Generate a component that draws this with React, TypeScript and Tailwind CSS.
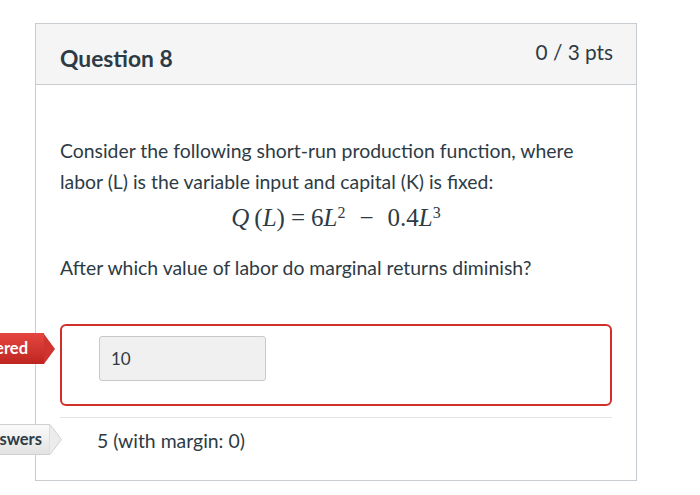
export default function App() {
  return (
    <div className="relative w-[700px] h-[495px] bg-white overflow-hidden" style={{ fontFamily: 'Lato, "Noto Sans", sans-serif' }}>
      <div className="absolute left-[35px] top-[23px] w-[602px] h-[458px] border border-[#c7cdd1] flex flex-col">
        {/* Header */}
        <div className="h-[61px] bg-[#f5f5f5] border-b border-[#c7cdd1] flex items-start justify-between pl-[24px] pr-[23px]">
          <h2 className="mt-[19px] text-[22.8px] font-bold text-[#2d3b45] leading-[30px]">Question 8</h2>
          <span className="mt-[14px] text-[20.8px] text-[#2d3b45] leading-[28px]">0 / 3 pts</span>
        </div>

        {/* Body */}
        <div className="px-[24px] pt-[50px] text-[19.4px] text-[#2d3b45]">
          <p className="leading-[31px]">
            Consider the following short-run production function, where
            <br />
            labor (L) is the variable input and capital (K) is fixed:
          </p>
          <div
            className="flex justify-center items-baseline h-[46px] pt-[2px] text-[25px] text-[#2d3b45]"
            style={{ fontFamily: '"Liberation Serif", "DejaVu Serif", serif' }}
          >
            <span className="italic">Q</span>
            <span className="ml-[5px]">(</span>
            <span className="italic">L</span>
            <span>)</span>
            <span className="mx-[6px]">=</span>
            <span>6</span>
            <span className="italic">L</span>
            <sup className="text-[16px]">2</sup>
            <span className="mx-[14px]">−</span>
            <span>0.4</span>
            <span className="italic">L</span>
            <sup className="text-[16px]">3</sup>
          </div>
          <p className="mt-[9px] leading-[31px]">After which value of labor do marginal returns diminish?</p>

          <div className="mt-[41px] h-[82px] border-2 border-[#d12f2a] rounded-[6px] pt-[10px] pl-[37px]">
            <div className="w-[167px] h-[45px] bg-[#f0f0f0] border border-[#c9c9c9] rounded-[3px] flex items-center pl-[11px] text-[17px] text-[#2d3b45]">
              10
            </div>
          </div>

          <div className="mt-[11px] border-t border-[#e3e6e8] pt-[9px] pl-[37px] leading-[28px]">
            5 (with margin: 0)
          </div>
        </div>
      </div>

      {/* Answer tags */}
      <div className="absolute right-[645px] top-[333px] h-[31px] flex items-center">
        <div className="h-full flex items-center whitespace-nowrap pr-[16px] pl-[10px] text-[16.5px] font-bold text-white bg-gradient-to-b from-[#e5463f] to-[#bf2520] rounded-l-[3px]">
          You Answered
        </div>
        <div className="w-0 h-0 border-y-[15.5px] border-y-transparent border-l-[11px] border-l-[#d0342e]" />
      </div>

      <div className="absolute right-[638px] top-[424px] h-[31px] flex items-center">
        <div className="h-full flex items-center whitespace-nowrap pr-[8px] pl-[10px] text-[16.5px] font-bold text-[#2d3b45] bg-gradient-to-b from-[#fbfbfb] to-[#e2e2e2] border-y border-[#d0d0d0] rounded-l-[3px]">
          Correct Answers
        </div>
        <svg width="13" height="31" viewBox="0 0 13 31" className="-ml-px">
          <path d="M0 0.5 L1 0.5 L12.5 15.5 L1 30.5 L0 30.5 Z" fill="#ececec" stroke="#d0d0d0" />
        </svg>
      </div>
    </div>
  )
}
